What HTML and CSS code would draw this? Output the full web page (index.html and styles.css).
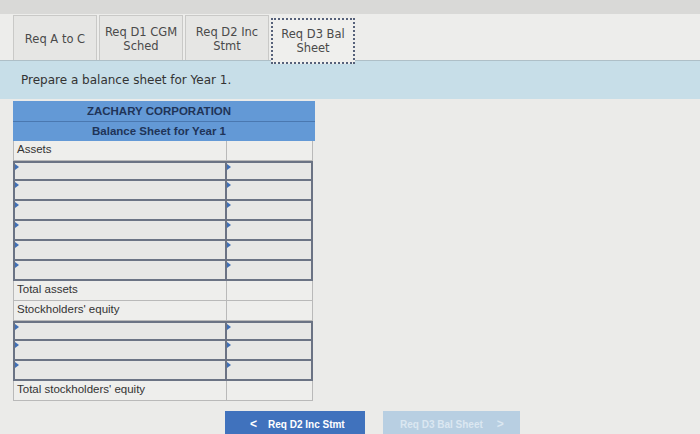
FILE: index.html
```html
<!DOCTYPE html>
<html>
<head>
<meta charset="utf-8">
<link rel="stylesheet" href="styles.css">
</head>
<body>
<div class="topband"></div>
<div class="tabs">
  <div class="tab">Req A to C</div>
  <div class="tab">Req D1 CGM<br>Sched</div>
  <div class="tab">Req D2 Inc<br>Stmt</div>
  <div class="tab active">Req D3 Bal<br>Sheet</div>
</div>
<div class="band">Prepare a balance sheet for Year 1.</div>
<div class="sheet">
  <div class="hdr h1">ZACHARY CORPORATION</div>
  <div class="hdr h2">Balance Sheet for Year 1</div>
  <div class="row label"><div class="c1">Assets</div><div class="c2"></div></div>
  <div class="row input first"><div class="c1"></div><div class="c2"></div></div>
  <div class="row input"><div class="c1"></div><div class="c2"></div></div>
  <div class="row input"><div class="c1"></div><div class="c2"></div></div>
  <div class="row input"><div class="c1"></div><div class="c2"></div></div>
  <div class="row input"><div class="c1"></div><div class="c2"></div></div>
  <div class="row input"><div class="c1"></div><div class="c2"></div></div>
  <div class="row label"><div class="c1">Total assets</div><div class="c2"></div></div>
  <div class="row label"><div class="c1">Stockholders' equity</div><div class="c2"></div></div>
  <div class="row input first"><div class="c1"></div><div class="c2"></div></div>
  <div class="row input"><div class="c1"></div><div class="c2"></div></div>
  <div class="row input"><div class="c1"></div><div class="c2"></div></div>
  <div class="row label"><div class="c1">Total stockholders' equity</div><div class="c2"></div></div>
</div>
<div class="nav">
  <div class="btn prev"><span class="chev">&lt;</span>Req D2 Inc Stmt</div>
  <div class="btn next">Req D3 Bal Sheet<span class="chev r">&gt;</span></div>
</div>
</body>
</html>
```
FILE: styles.css
```css
html, body { margin: 0; padding: 0; }
body {
  width: 700px;
  height: 434px;
  overflow: hidden;
  background: #ebebe9;
  font-family: "DejaVu Sans", Verdana, sans-serif;
}
.topband { height: 14px; background: #d9d9d7; }
.tabs {
  display: flex;
  gap: 2px;
  padding-left: 13px;
  height: 46px;
  background: #ededeb;
  align-items: flex-start;
}
.tab {
  width: 82px;
  height: 42px;
  margin-top: 1px;
  background: #e6e6e4;
  border: 1px solid #c9c9c7;
  border-bottom: none;
  color: #4a4a4a;
  font-size: 11.5px;
  line-height: 14px;
  display: flex;
  align-items: center;
  justify-content: center;
  text-align: center;
  padding-top: 2px;
  box-sizing: content-box;
}
.tab.active {
  margin-top: 4px;
  height: 42px;
  width: 80px;
  padding-top: 0;
  background: #efefed;
  border: 2px dotted #56617a;
  position: relative;
  z-index: 2;
}
.band {
  height: 38px;
  background: #c7dee8;
  border-top: 1px solid #aebfc7;
  color: #333;
  font-size: 12px;
  padding-left: 21px;
  display: flex;
  align-items: center;
}
.sheet {
  margin: 2px 0 0 13px;
  width: 302px;
  font-family: "Liberation Sans", Arial, sans-serif;
}
.hdr {
  background: #6399d6;
  color: #1f3458;
  font-weight: bold;
  font-size: 11.5px;
  text-align: center;
  padding-right: 10px;
  height: 20px;
  line-height: 20px;
  border-bottom: 1px solid #4a78b0;
}
.h2 { height: 19px; line-height: 19px; border-bottom: none; }
.row {
  display: flex;
  height: 20px;
}
.c1 { width: 214px; box-sizing: border-box; position: relative; }
.c2 { width: 86px; box-sizing: border-box; position: relative; }
.label .c1, .label .c2 {
  background: #eeeeec;
  border: 1px solid #b9b9b9;
  border-top: none;
  color: #333;
  font-size: 11.5px;
  line-height: 17px;
  padding-left: 3px;
}
.label .c2 { border-left: none; }
.input .c1, .input .c2 {
  background: #e7e7e5;
  border: 2px solid #6b7384;
  border-top: none;
}
.input.first .c1, .input.first .c2 { border-top: 2px solid #6b7384; }
.input .c2 { border-left: none; }
.input .c1::before, .input .c2::before {
  content: "";
  position: absolute;
  left: 0;
  top: 1px;
  width: 0;
  height: 0;
  border-left: 4px solid #3f6fb6;
  border-top: 3px solid transparent;
  border-bottom: 3px solid transparent;
}
.nav {
  display: flex;
  gap: 18px;
  padding-left: 225px;
  margin-top: 10px;
}
.btn {
  height: 26px;
  width: 140px;
  display: flex;
  align-items: center;
  font-family: "Liberation Sans", Arial, sans-serif;
  font-weight: bold;
  font-size: 10px;
  color: #fff;
  box-sizing: border-box;
}
.prev { background: #4072bd; padding-left: 25px; }
.next { background: #b8cfe2; color: #dbe7f1; width: 137px; padding-left: 17px; }
.chev { font-size: 12px; margin-right: 11px; }
.chev.r { margin-left: 14px; margin-right: 0; }
```
